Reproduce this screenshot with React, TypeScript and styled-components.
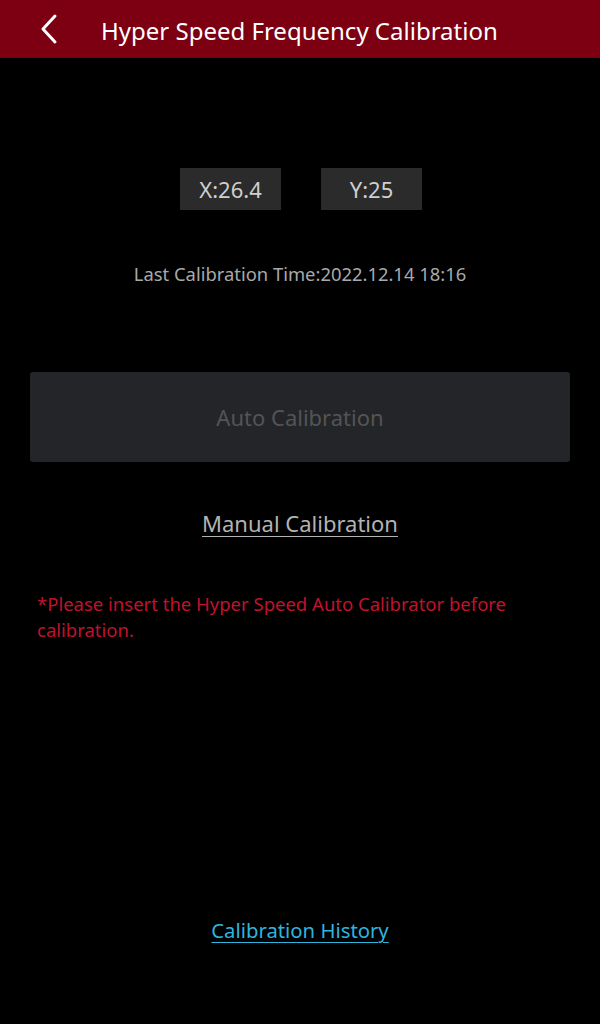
import React from 'react';
import styled, { createGlobalStyle } from 'styled-components';

const GlobalStyle = createGlobalStyle`
  html, body {
    margin: 0;
    padding: 0;
    background: #000;
  }
  body {
    font-family: "Noto Sans", "Open Sans", sans-serif;
  }
`;

const Screen = styled.div`
  display: flex;
  flex-direction: column;
  min-height: 1024px;
  background: #000;
`;

const Header = styled.header`
  display: flex;
  align-items: center;
  height: 58px;
  padding-left: 39px;
  background: #7c0011;
  box-sizing: border-box;
`;

const BackButton = styled.button`
  display: flex;
  align-items: center;
  padding: 0;
  margin: 0 42px 0 0;
  border: 0;
  background: none;
  cursor: pointer;
`;

const Title = styled.h1`
  margin: 0;
  padding-top: 3px;
  font-size: 24px;
  font-weight: 400;
  color: #fff;
  line-height: 1;
`;

const Content = styled.main`
  display: flex;
  flex: 1;
  flex-direction: column;
  align-items: center;
  padding: 110px 0 79px;
`;

const CoordRow = styled.div`
  display: flex;
  gap: 40px;
  padding-left: 2px;
`;

const CoordBox = styled.div`
  display: flex;
  align-items: center;
  justify-content: center;
  width: 101px;
  height: 42px;
  background: #2b2b2b;
  color: #cfcfcf;
  font-size: 22px;
`;

const LastTime = styled.p`
  margin: 52px 0 0;
  font-size: 18.4px;
  line-height: 24px;
  color: #a9a9a9;
`;

const AutoButton = styled.button`
  align-self: stretch;
  height: 90px;
  margin: 86px 30px 0;
  border: 0;
  border-radius: 3px;
  background: #242528;
  color: #535456;
  font-family: inherit;
  font-size: 22px;
`;

const LinkText = styled.a<{ color: string; size: number }>`
  font-size: ${({ size }) => size}px;
  line-height: 30px;
  color: ${({ color }) => color};
  text-decoration: underline;
  text-underline-offset: 4px;
  text-decoration-thickness: 1px;
  cursor: pointer;
`;

const ManualLink = styled(LinkText)`
  margin-top: 46px;
`;

const Warning = styled.p`
  align-self: stretch;
  margin: 53px 0 0;
  padding: 0 37px;
  font-size: 18.5px;
  line-height: 26px;
  color: #c0122d;
`;

const HistoryLink = styled(LinkText)`
  margin-top: auto;
`;

const ChevronLeft = () => (
  <svg width="20" height="32" viewBox="0 0 20 32" fill="none">
    <path
      d="M16 3 L4 16 L16 29"
      stroke="#fff"
      strokeWidth="3"
      strokeLinecap="round"
      strokeLinejoin="round"
    />
  </svg>
);

export default function App() {
  return (
    <Screen>
      <GlobalStyle />
      <Header>
        <BackButton aria-label="Back">
          <ChevronLeft />
        </BackButton>
        <Title>Hyper Speed Frequency Calibration</Title>
      </Header>
      <Content>
        <CoordRow>
          <CoordBox>X:26.4</CoordBox>
          <CoordBox>Y:25</CoordBox>
        </CoordRow>
        <LastTime>Last Calibration Time:2022.12.14 18:16</LastTime>
        <AutoButton disabled>Auto Calibration</AutoButton>
        <ManualLink color="#b3b3b3" size={22}>Manual Calibration</ManualLink>
        <Warning>*Please insert the Hyper Speed Auto Calibrator before calibration.</Warning>
        <HistoryLink color="#2fb4dc" size={20.3}>Calibration History</HistoryLink>
      </Content>
    </Screen>
  );
}
